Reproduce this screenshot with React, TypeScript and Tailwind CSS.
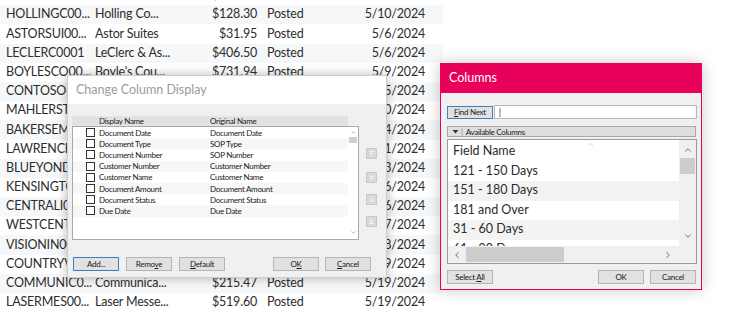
import React from 'react';
import { ChevronUp, ChevronDown, ChevronLeft, ChevronRight } from 'lucide-react';

const invoices = [
  ['FOURTHCO0001', 'Fourth Coffee', '$212.40', 'Posted', '5/10/2024'],
  ['HOLLINGC00...', 'Holling Co...', '$128.30', 'Posted', '5/10/2024'],
  ['ASTORSUI00...', 'Astor Suites', '$31.95', 'Posted', '5/6/2024'],
  ['LECLERC0001', 'LeClerc & As...', '$406.50', 'Posted', '5/6/2024'],
  ['BOYLESCO00...', "Boyle's Cou...", '$731.94', 'Posted', '5/9/2024'],
  ['CONTOSOL0001', 'Contoso, Ltd.', '$95.10', 'Posted', '5/5/2024'],
  ['MAHLERST0001', 'Mahler State...', '$310.25', 'Posted', '5/10/2024'],
  ['BAKERSEM0001', 'Baker Semin...', '$57.80', 'Posted', '5/14/2024'],
  ['LAWRENCE0001', 'Lawrence Ci...', '$122.00', 'Posted', '5/11/2024'],
  ['BLUEYOND0001', 'Blue Yonder...', '$640.12', 'Posted', '5/13/2024'],
  ['KENSINGT0001', 'Kensington ...', '$89.99', 'Posted', '5/16/2024'],
  ['CENTRALI0001', 'Central Illin...', '$274.30', 'Posted', '5/16/2024'],
  ['WESTCENT0001', 'West Centra...', '$18.45', 'Posted', '5/17/2024'],
  ['VISIONIN0001', 'Vision Inc.', '$402.70', 'Posted', '5/18/2024'],
  ['COUNTRYV0001', 'Country View...', '$66.00', 'Posted', '5/19/2024'],
  ['COMMUNIC0...', 'Communica...', '$215.47', 'Posted', '5/19/2024'],
  ['LASERMES00...', 'Laser Messe...', '$519.60', 'Posted', '5/19/2024'],
];

const displayRows = [
  ['Document Date', 'Document Date'],
  ['Document Type', 'SOP Type'],
  ['Document Number', 'SOP Number'],
  ['Customer Number', 'Customer Number'],
  ['Customer Name', 'Customer Name'],
  ['Document Amount', 'Document Amount'],
  ['Document Status', 'Document Status'],
  ['Due Date', 'Due Date'],
];

const fields = ['121 - 150 Days', '151 - 180 Days', '181 and Over', '31 - 60 Days', '61 - 90 Days'];

const WinButton = ({ children, focused }: { children: React.ReactNode; focused?: boolean }) => (
  <div
    className={
      focused
        ? 'w-[46px] h-[14px] flex items-center justify-center bg-[#e1e1e1] border border-[#3d7fc4] text-[8px] tracking-[-0.3px] text-[#1a1a1a]'
        : 'w-[46px] h-[14px] flex items-center justify-center bg-[#e1e1e1] border border-[#b4b4b4] text-[8px] tracking-[-0.3px] text-[#1a1a1a]'
    }
  >
    <span className="whitespace-pre">{children}</span>
  </div>
);

const MoveButton = ({ d }: { d: string }) => (
  <div className="w-[11px] h-[11px] flex items-center justify-center bg-[#d9d9d9] border border-[#c8c8c8]">
    <svg width="7" height="7" viewBox="0 0 7 7" fill="none" stroke="#f2f2f2" strokeWidth="1">
      <path d={d} />
    </svg>
  </div>
);

const ChangeColumnDialog = () => (
  <div className="absolute left-[67px] top-[75px] w-[320px] h-[203px] flex flex-col bg-[#f0f0f0] border border-[#cdcdcd] shadow-[0_0_10px_rgba(0,0,0,0.28)]">
    <div className="h-[28px] bg-white flex items-center pl-[8px] text-[12.5px] text-[#9b9b9b]">Change Column Display</div>
    <div className="flex-1 flex flex-col pl-[4px] pt-[12px]">
      <div className="flex gap-[7px]">
        <div className="flex flex-col">
          <div className="w-[276px] h-[10px] bg-[#e2e2e2] flex items-center text-[8px] tracking-[-0.3px] text-[#1a1a1a]">
            <span className="ml-[27px] w-[111px]">Display Name</span>
            <span>Original Name</span>
          </div>
          <div className="w-[287px] h-[114px] border border-[#a9a9a9] bg-white flex">
            <div className="flex-1 flex flex-col">
              {displayRows.map((r, i) => (
                <div
                  key={r[0]}
                  className={
                    i % 2
                      ? 'h-[11.2px] flex items-center bg-[#f7f7f7] text-[8px] tracking-[-0.3px] text-[#1a1a1a]'
                      : 'h-[11.2px] flex items-center bg-white text-[8px] tracking-[-0.3px] text-[#1a1a1a]'
                  }
                >
                  <div className="ml-[13px] w-[9px] h-[9px] border border-[#333] bg-white" />
                  <span className="ml-[4px] w-[111px]">{r[0]}</span>
                  <span>{r[1]}</span>
                </div>
              ))}
            </div>
            <div className="w-[10px] flex flex-col items-center">
              <ChevronUp size={7} strokeWidth={1.5} className="mt-[2px] text-[#606060]" />
              <div className="w-[8px] h-[6px] bg-[#d0d0d0] mt-[1px]" />
              <ChevronDown size={7} strokeWidth={1.5} className="mt-auto mb-[3px] text-[#606060]" />
            </div>
          </div>
        </div>
        <div className="flex flex-col pt-[32px]">
          <MoveButton d="M1 1.5h5M3.5 6V2.5M2 4l1.5-1.5L5 4" />
          <div className="mt-[13px]">
            <MoveButton d="M3.5 6V1.5M1.5 3.5l2-2 2 2" />
          </div>
          <div className="mt-[11px]">
            <MoveButton d="M3.5 1v4.5M1.5 3.5l2 2 2-2" />
          </div>
          <div className="mt-[11px]">
            <MoveButton d="M1 5.5h5M3.5 1v3.5M2 3l1.5 1.5L5 3" />
          </div>
        </div>
      </div>
      <div className="flex items-center ml-[1px] mt-[17px]">
        <WinButton focused>Add...</WinButton>
        <div className="ml-[7px]">
          <WinButton>Remo<span className="underline">v</span>e</WinButton>
        </div>
        <div className="ml-[7px]">
          <WinButton><span className="underline">D</span>efault</WinButton>
        </div>
        <div className="ml-[48px]">
          <WinButton>O<span className="underline">K</span></WinButton>
        </div>
        <div className="ml-[6px]">
          <WinButton><span className="underline">C</span>ancel</WinButton>
        </div>
      </div>
    </div>
  </div>
);

const ColumnsDialog = () => (
  <div className="absolute left-[440px] top-[63px] w-[262px] h-[227px] flex flex-col bg-[#f0f0f0] border border-[#e8005a] shadow-[0_0_14px_rgba(0,0,0,0.22)]">
    <div className="h-[29px] bg-[#e8005a] flex items-center pl-[8px] text-[12.5px] text-white">Columns</div>
    <div className="flex-1 flex flex-col pl-[6px] pr-[4px] pt-[12px]">
      <div className="flex items-center h-[14px]">
        <div className="w-[46px] h-[13px] flex items-center justify-center bg-[#e1e1e1] border border-[#3d7fc4] text-[8px] tracking-[-0.3px] text-[#1a1a1a]">
          <span className="whitespace-pre"><span className="underline">F</span>ind Next</span>
        </div>
        <div className="ml-[1px] w-[204px] h-[14px] bg-white border border-[#b8b8b8] flex items-center pl-[4px] text-[9px] text-[#222]">|</div>
      </div>
      <div className="mt-[7px] w-[249px] h-[11px] bg-[#dedede] border border-[#a8a8a8] flex items-center text-[8px] tracking-[-0.3px] text-[#1a1a1a]">
        <svg width="7" height="5" viewBox="0 0 7 5" className="ml-[4px]">
          <path d="M0.5 1h6L3.5 4.5z" fill="#333" />
        </svg>
        <span className="ml-[2px] text-[#888]">|</span>
        <span className="ml-[3px]">Available Columns</span>
      </div>
      <div className="mt-[2px] w-[250px] h-[125px] bg-white border border-[#9a9a9a] flex flex-col">
        <div className="flex h-[106px]">
          <div className="flex-1 flex flex-col overflow-hidden pt-[2px] text-[12.5px] text-[#2b2b2b]">
            <div className="relative h-[19.5px] shrink-0 flex items-center pl-[5px]">
              Field Name
              <ChevronUp size={9} strokeWidth={1.2} className="absolute left-[138px] top-[-2px] text-[#a0a0a0]" />
            </div>
            {fields.map((f, i) => (
              <div
                key={f}
                className={
                  i % 2
                    ? 'h-[19.5px] shrink-0 flex items-center pl-[5px] bg-[#f3f3f3]'
                    : 'h-[19.5px] shrink-0 flex items-center pl-[5px] bg-white'
                }
              >
                {f}
              </div>
            ))}
          </div>
          <div className="w-[17px] flex flex-col items-center bg-[#f0f0f0]">
            <ChevronUp size={10} strokeWidth={2} className="mt-[5px] text-[#555]" />
            <div className="w-[15px] h-[16px] bg-[#cdcdcd] mt-[3px]" />
            <ChevronDown size={10} strokeWidth={2} className="mt-auto mb-[5px] text-[#555]" />
          </div>
        </div>
        <div className="flex h-[17px]">
          <div className="flex-1 flex items-center bg-[#f0f0f0]">
            <ChevronLeft size={10} strokeWidth={2} className="ml-[4px] text-[#555]" />
            <div className="ml-[4px] w-[98px] h-[15px] bg-[#cdcdcd]" />
            <ChevronRight size={10} strokeWidth={2} className="ml-auto mr-[6px] text-[#555]" />
          </div>
          <div className="w-[17px] bg-[#f0f0f0]" />
        </div>
      </div>
      <div className="mt-[6px] flex items-center">
        <WinButton>Select <span className="underline">A</span>ll</WinButton>
        <div className="ml-auto">
          <WinButton>OK</WinButton>
        </div>
        <div className="ml-[6px] mr-[1px]">
          <WinButton>Cancel</WinButton>
        </div>
      </div>
    </div>
  </div>
);

export default function App() {
  return (
    <div className="relative w-[747px] h-[316px] overflow-hidden bg-white font-['Lato',sans-serif]">
      <div className="-mt-[14px] w-[443px] text-[12.5px] tracking-[-0.2px] text-[#2d2d2d]">
        {invoices.map((r, i) => (
          <div key={r[0] + i} className={i % 2 ? 'h-[19.2px] flex items-center bg-[#f6f7f8]' : 'h-[19.2px] flex items-center bg-white'}>
            <span className="ml-[6px] w-[89px] whitespace-nowrap overflow-hidden">{r[0]}</span>
            <span className="w-[100px] whitespace-nowrap overflow-hidden">{r[1]}</span>
            <span className="w-[62px] text-right">{r[2]}</span>
            <span className="ml-[10px] w-[70px]">{r[3]}</span>
            <span className="w-[88px] text-right">{r[4]}</span>
          </div>
        ))}
      </div>
      <ChangeColumnDialog />
      <ColumnsDialog />
    </div>
  );
}
